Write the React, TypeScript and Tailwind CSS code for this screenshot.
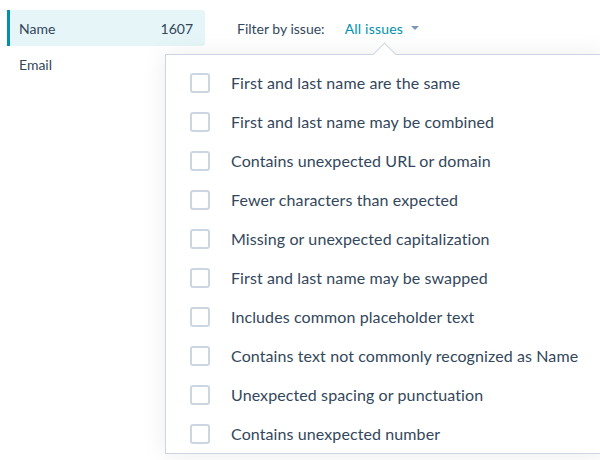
import React from 'react';

const issues = [
    'First and last name are the same',
    'First and last name may be combined',
    'Contains unexpected URL or domain',
    'Fewer characters than expected',
    'Missing or unexpected capitalization',
    'First and last name may be swapped',
    'Includes common placeholder text',
    'Contains text not commonly recognized as Name',
    'Unexpected spacing or punctuation',
    'Contains unexpected number',
];

const App: React.FC = () => {
    return (
        <main className="relative w-[600px] h-[460px] overflow-hidden bg-white text-[#33475b] font-['Lato','Noto_Sans',sans-serif]">
            <div className="flex pt-[10px] pl-[7px]">
                <nav className="w-[198px] flex flex-col text-[14px]">
                    <div className="flex items-center justify-between h-[36px] pl-[9px] pr-[12px] bg-[#e5f5f8] border-l-[3px] border-[#0091ae] rounded-r-[3px]">
                        <span>Name</span>
                        <span>1607</span>
                    </div>
                    <div className="flex items-center h-[37px] pl-[12px]">
                        <span>Email</span>
                    </div>
                </nav>
                <div className="relative flex-1 pl-[32px]">
                    <div className="flex items-center h-[36px] text-[14px]">
                        <span>Filter by issue:</span>
                        <button className="ml-[20px] flex items-center text-[#0091ae] tracking-[0.2px]">
                            All issues
                            <span className="ml-[8px] w-0 h-0 border-l-[4px] border-r-[4px] border-t-[4px] border-l-transparent border-r-transparent border-t-[#7c98b6]" />
                        </button>
                    </div>
                </div>
            </div>

            <div className="absolute left-[165px] top-[54px] w-[440px] bg-white border border-[#cbd6e2] shadow-[0_1px_24px_0_rgba(0,0,0,0.08)]">
                <div className="absolute left-[210px] -top-[9px] w-[17px] h-[17px] rotate-45 bg-white border-l border-t border-[#cbd6e2]" />
                <ul className="relative pt-[8px] text-[16px] tracking-[0.1px]">
                    {issues.map(label => (
                        <li key={label} className="flex items-center h-[39px] pl-[24px]">
                            <span className="w-[20px] h-[20px] rounded-[3px] border-2 border-[#cbd6e2] bg-white shrink-0" />
                            <span className="ml-[21px] whitespace-nowrap">{label}</span>
                        </li>
                    ))}
                </ul>
            </div>
        </main>
    );
};

export default App;
